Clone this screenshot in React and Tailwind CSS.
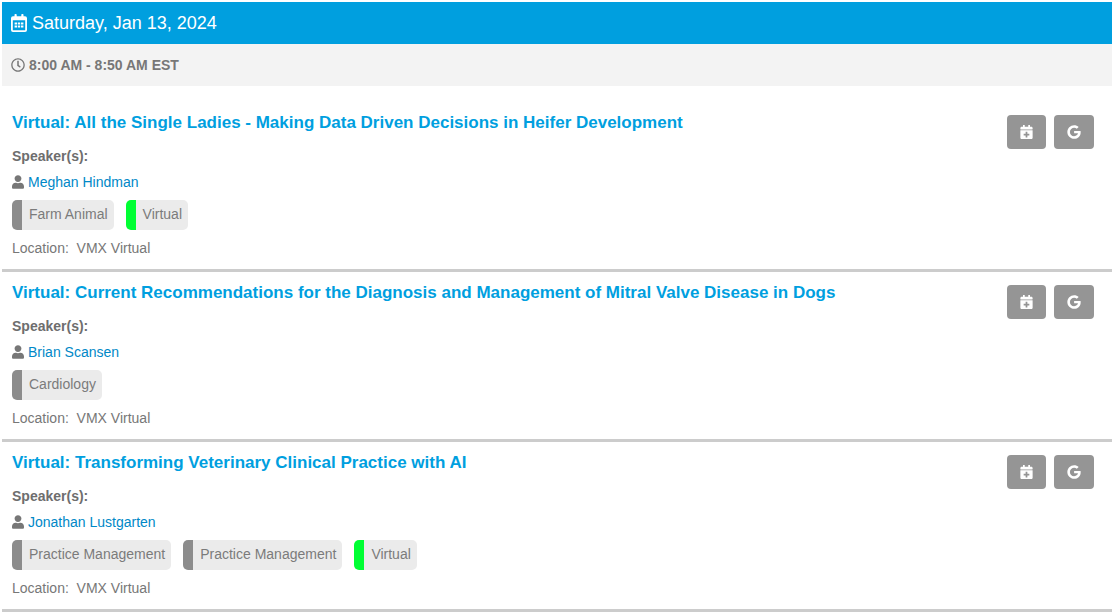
import React from 'react';
import { FaCalendarPlus, FaGoogle, FaRegClock, FaUser } from 'react-icons/fa';

const sessions = [
  {
    title: 'Virtual: All the Single Ladies - Making Data Driven Decisions in Heifer Development',
    speaker: 'Meghan Hindman',
    tags: ['Farm Animal', 'Virtual'],
    location: 'VMX Virtual',
  },
  {
    title: 'Virtual: Current Recommendations for the Diagnosis and Management of Mitral Valve Disease in Dogs',
    speaker: 'Brian Scansen',
    tags: ['Cardiology'],
    location: 'VMX Virtual',
  },
  {
    title: 'Virtual: Transforming Veterinary Clinical Practice with AI',
    speaker: 'Jonathan Lustgarten',
    tags: ['Practice Management', 'Practice Management', 'Virtual'],
    location: 'VMX Virtual',
  },
];

function CalendarIcon() {
  return (
    <svg viewBox="0 0 16 18" className="h-[18px] w-4" fill="currentColor" aria-hidden="true">
      <path
        fillRule="evenodd"
        d="M3.5 .8a.8.8 0 0 1 .8-.8h.6a.8.8 0 0 1 .8.8v1.5h4.6V.8a.8.8 0 0 1 .8-.8h.6a.8.8 0 0 1 .8.8v1.5H14a2 2 0 0 1 2 2V16a2 2 0 0 1-2 2H2a2 2 0 0 1-2-2V4.3a2 2 0 0 1 2-2h1.5zM1.8 6.3v9.6a.4.4 0 0 0 .4.4h11.6a.4.4 0 0 0 .4-.4V6.3z"
      />
      <path d="M3.6 8.4h2.4v2H3.6zM6.8 8.4h2.4v2H6.8zM10 8.4h2.4v2H10zM3.6 11.4h2.4v2H3.6zM6.8 11.4h2.4v2H6.8zM10 11.4h2.4v2H10z" />
    </svg>
  );
}

function Tag({ label }) {
  return (
    <li
      className={`h-[30px] rounded-[5px] border-l-10 bg-[#ebebeb] pr-1.5 pl-[7px] leading-[29px] text-[#7b7b7b] ${
        label === 'Virtual' ? 'border-[#00ff33]' : 'border-[#8c8c8c]'
      }`}
    >
      {label}
    </li>
  );
}

function CalendarButton({ label, children }) {
  return (
    <button
      type="button"
      aria-label={label}
      className="flex h-[34px] items-center justify-center rounded bg-[#959595] px-[13px] text-sm text-white"
    >
      {children}
    </button>
  );
}

function Session({ session }) {
  return (
    <article className="flex items-start justify-between border-b-3 border-[#cccccc] pt-[9px] pr-[18px] pb-[9px] pl-[10px]">
      <div>
        <h2 className="text-[17px] leading-6 font-bold text-[#009fdf]">
          <a href="#session">{session.title}</a>
        </h2>
        <p className="mt-[7px] leading-7 font-bold text-[#6e6e6e]">Speaker(s):</p>
        <p className="flex items-center gap-1 leading-6">
          <FaUser className="h-3.5 w-3" />
          <a href="#speaker" className="text-[#0088c7]">{session.speaker}</a>
        </p>
        <ul className="mt-1.5 flex gap-3">
          {session.tags.map((tag, i) => (
            <Tag key={i} label={tag} />
          ))}
        </ul>
        <p className="mt-1.5 leading-6">Location:&nbsp; {session.location}</p>
      </div>
      <div className="mt-1 flex gap-2">
        <CalendarButton label="Add to calendar">
          <FaCalendarPlus className="h-3.5 w-[13px]" />
        </CalendarButton>
        <CalendarButton label="Add to Google Calendar">
          <FaGoogle />
        </CalendarButton>
      </div>
    </article>
  );
}

export default function App() {
  return (
    <main className="mt-0.5 mr-2 ml-0.5 font-['Liberation_Sans',Arial,sans-serif] text-sm text-[#777777]">
      <h1 className="flex h-[42px] items-center gap-[5px] bg-[#009fdf] px-[9px] text-lg text-white">
        <CalendarIcon />
        Saturday, Jan 13, 2024
      </h1>
      <div className="flex h-[42px] items-center gap-1 bg-[#f3f3f3] px-[9px] font-bold">
        <FaRegClock />
        8:00 AM - 8:50 AM EST
      </div>
      <div className="mt-4">
        {sessions.map((session) => (
          <Session key={session.title} session={session} />
        ))}
      </div>
    </main>
  );
}
